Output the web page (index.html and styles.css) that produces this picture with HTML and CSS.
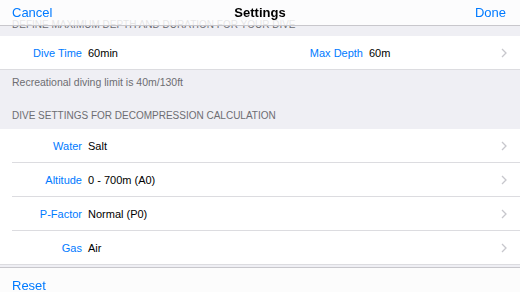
FILE: index.html
```html
<!DOCTYPE html>
<html lang="en">

<head>
  <meta charset="UTF-8" />
  <title>Settings</title>
  <link rel="stylesheet" href="styles.css">
</head>

<body>
  <header class="nav-bar">
    <button class="nav-btn">Cancel</button>
    <h1 class="nav-title">Settings</h1>
    <button class="nav-btn nav-btn--done">Done</button>
  </header>

  <main class="settings">
    <p class="section-header section-header--first">Define maximum depth and duration for your dive</p>
    <div class="group">
      <div class="cell">
        <div class="pair pair--first">
          <span class="cell-label">Dive Time</span>
          <span class="cell-value">60min</span>
        </div>
        <div class="pair">
          <span class="cell-label">Max Depth</span>
          <span class="cell-value">60m</span>
        </div>
        <svg class="chevron" width="6" height="10" viewBox="0 0 6 10"><polyline points="1,1 5,5 1,9" /></svg>
      </div>
    </div>
    <p class="section-footer">Recreational diving limit is 40m/130ft</p>

    <p class="section-header">Dive settings for decompression calculation</p>
    <div class="group">
      <div class="cell">
        <span class="cell-label">Water</span>
        <span class="cell-value">Salt</span>
        <svg class="chevron" width="6" height="10" viewBox="0 0 6 10"><polyline points="1,1 5,5 1,9" /></svg>
      </div>
      <div class="cell">
        <span class="cell-label">Altitude</span>
        <span class="cell-value">0 - 700m (A0)</span>
        <svg class="chevron" width="6" height="10" viewBox="0 0 6 10"><polyline points="1,1 5,5 1,9" /></svg>
      </div>
      <div class="cell">
        <span class="cell-label">P-Factor</span>
        <span class="cell-value">Normal (P0)</span>
        <svg class="chevron" width="6" height="10" viewBox="0 0 6 10"><polyline points="1,1 5,5 1,9" /></svg>
      </div>
      <div class="cell">
        <span class="cell-label">Gas</span>
        <span class="cell-value">Air</span>
        <svg class="chevron" width="6" height="10" viewBox="0 0 6 10"><polyline points="1,1 5,5 1,9" /></svg>
      </div>
    </div>
  </main>

  <footer class="tool-bar">
    <button class="nav-btn">Reset</button>
  </footer>
</body>

</html>
```

FILE: styles.css
```css
:root {
  --tint: #007aff;
  --grouped-bg: #efeff4;
  --cell-bg: #ffffff;
  --separator: #dcdce0;
  --bar-border: #c8c7cc;
  --muted: #6d6d72;
}

* {
  margin: 0;
  padding: 0;
  box-sizing: border-box;
}

body {
  font-family: 'Liberation Sans', Arial, sans-serif;
  background-color: var(--grouped-bg);
  color: #000;
  overflow: hidden;
  height: 292px;
}

/* bars sit over the scrolled list */
.nav-bar {
  position: fixed;
  top: 0;
  left: 0;
  right: 0;
  height: 26px;
  padding: 0 14px 1px 12px;
  display: flex;
  justify-content: space-between;
  align-items: center;
  background-color: rgba(255, 255, 255, 0.82);
  border-bottom: 1px solid var(--bar-border);
  z-index: 2;
}

.nav-btn {
  background: none;
  border: none;
  font-family: inherit;
  font-size: 13px;
  color: var(--tint);
  cursor: pointer;
}

.nav-title {
  position: absolute;
  left: 0;
  right: 0;
  text-align: center;
  font-size: 13px;
  font-weight: bold;
  pointer-events: none;
}

.tool-bar {
  position: fixed;
  left: 0;
  right: 0;
  bottom: 0;
  height: 25px;
  padding: 8px 12px 0;
  background-color: #fcfcfc;
  border-top: 1px solid var(--bar-border);
  z-index: 2;
}

.tool-bar .nav-btn {
  line-height: 16px;
}

.settings {
  display: flex;
  flex-direction: column;
}

.section-header {
  padding: 22px 12px 7px;
  font-size: 10px;
  line-height: 12px;
  text-transform: uppercase;
  color: var(--muted);
}

.section-header--first {
  padding-top: 19px;
  padding-bottom: 5px;
}

.section-footer {
  padding: 6px 12px 0;
  font-size: 10.5px;
  line-height: 12px;
  color: var(--muted);
}

.group {
  background-color: var(--cell-bg);
  border-bottom: 1px solid var(--separator);
}

.cell {
  height: 34px;
  margin-left: 12px;
  padding-right: 13px;
  display: flex;
  align-items: center;
  gap: 6px;
  font-size: 11px;
  border-bottom: 1px solid var(--separator);
}

.cell:last-child {
  height: 33px;
  border-bottom: none;
}

.pair {
  display: flex;
  gap: 6px;
}

.pair--first {
  width: 275px;
}

.cell-label {
  width: 70px;
  text-align: right;
  color: var(--tint);
}

.chevron {
  margin-left: auto;
  fill: none;
  stroke: #c7c7cc;
  stroke-width: 1.3;
}
```
